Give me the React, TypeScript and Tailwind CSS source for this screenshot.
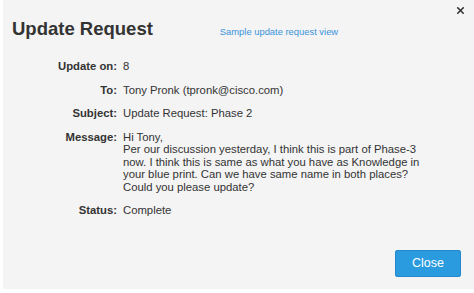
import { X } from 'lucide-react';

const rows: { label: string; value: React.ReactNode }[] = [
  { label: 'Update on:', value: '8' },
  { label: 'To:', value: 'Tony Pronk (tpronk@cisco.com)' },
  { label: 'Subject:', value: 'Update Request: Phase 2' },
  {
    label: 'Message:',
    value: (
      <div className="leading-[12.6px]">
        Hi Tony,
        <br />
        Per our discussion yesterday, I think this is part of Phase-3
        <br />
        now. I think this is same as what you have as Knowledge in
        <br />
        your blue print. Can we have same name in both places?
        <br />
        Could you please update?
      </div>
    ),
  },
  { label: 'Status:', value: 'Complete' },
];

export default function App() {
  return (
    <div
      className="w-[474px] h-[293px] bg-white pl-[3px] pb-[4px]"
      style={{ fontFamily: '"Liberation Sans", Arial, sans-serif' }}
    >
      <div className="relative w-full h-full bg-[#f4f4f4] text-[#333]">
        <button className="absolute top-[5px] right-[8px] text-[#333]">
          <X className="w-[11px] h-[11px]" strokeWidth={3.5} />
        </button>

        <div className="flex items-end pt-[18px] pl-[9px]">
          <h1 className="text-[18.5px] font-bold leading-[22px] text-[#333]">Update Request</h1>
          <a className="ml-[67px] mb-[2px] text-[9.4px] text-[#3a93da] leading-[12px]">Sample update request view</a>
        </div>

        <div className="mt-[20px] flex flex-col gap-[10.5px] text-[11.3px]">
          {rows.map((r) => (
            <div key={r.label} className="flex items-start leading-[13px]">
              <div className="w-[114px] shrink-0 text-right font-bold">{r.label}</div>
              <div className="pl-[6px]">{r.value}</div>
            </div>
          ))}
        </div>

        <div className="absolute right-[13px] bottom-[12px]">
          <button className="w-[66px] h-[27px] rounded-[2px] border border-[#2389cc] bg-[#2b9be0] text-white text-[12.5px]">
            Close
          </button>
        </div>
      </div>
    </div>
  );
}
